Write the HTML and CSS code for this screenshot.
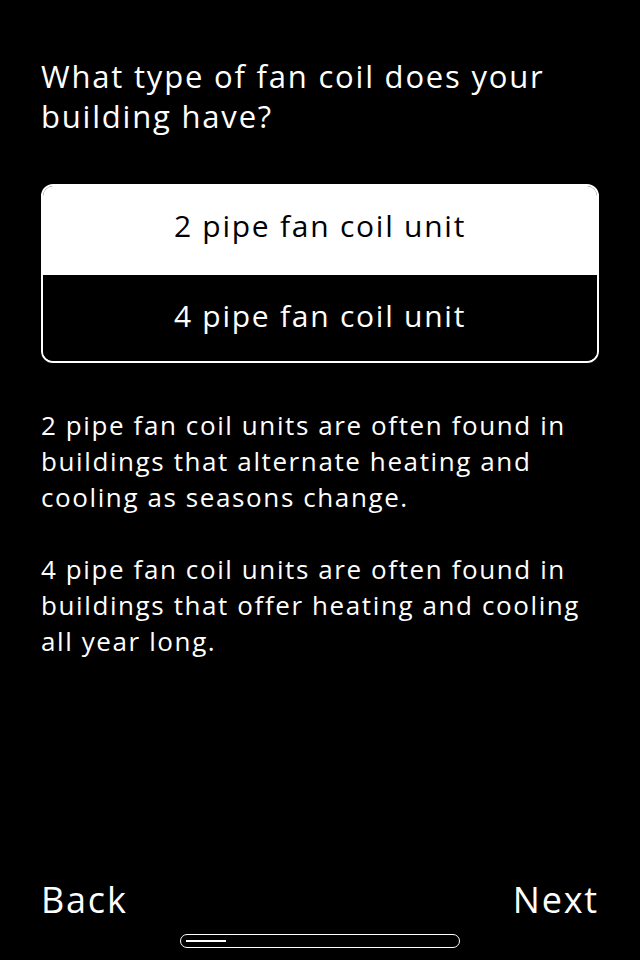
FILE: index.html
```html
<!DOCTYPE html>
<html>
<head>
<meta charset="utf-8">
<link rel="stylesheet" href="styles.css">
</head>
<body>
<div class="screen">
  <h1 class="title">What type of fan coil does your building have?</h1>
  <div class="options">
    <div class="option selected">2 pipe fan coil unit</div>
    <div class="option">4 pipe fan coil unit</div>
  </div>
  <div class="info">
    <p>2 pipe fan coil units are often found in buildings that alternate heating and cooling as seasons change.</p>
    <p>4 pipe fan coil units are often found in buildings that offer heating and cooling all year long.</p>
  </div>
  <div class="spacer"></div>
  <div class="nav">
    <span class="nav-btn">Back</span>
    <span class="nav-btn">Next</span>
  </div>
  <div class="progress"><div class="progress-fill"></div></div>
</div>
</body>
</html>
```
FILE: styles.css
```css
html, body {
  margin: 0;
  padding: 0;
  background: #000;
}
body {
  font-family: "Open Sans", "Noto Sans", sans-serif;
  color: #fff;
}
.screen {
  width: 640px;
  height: 960px;
  box-sizing: border-box;
  padding: 56px 41px 12px 41px;
  display: flex;
  flex-direction: column;
}
.title {
  margin: 0;
  font-weight: 400;
  font-size: 31px;
  line-height: 40px;
  letter-spacing: 1.8px;
  width: 558px;
}
.options {
  margin-top: 48px;
  border: 2px solid #fff;
  border-radius: 12px;
  overflow: hidden;
  display: flex;
  flex-direction: column;
}
.option {
  height: 80px;
  padding-bottom: 6px;
  display: flex;
  align-items: center;
  justify-content: center;
  font-size: 30px;
  letter-spacing: 1.75px;
  color: #fff;
  background: #000;
}
.option.selected {
  background: #fff;
  color: #000;
  height: 79px;
  padding-bottom: 10px;
}
.info {
  margin-top: 44px;
}
.info p {
  margin: 0 0 36px 0;
  font-size: 26px;
  line-height: 36px;
  letter-spacing: 1.6px;
}
.spacer { flex: 1; }
.nav {
  display: flex;
  justify-content: space-between;
  font-size: 36px;
  line-height: 40px;
  letter-spacing: 1.8px;
}
.progress {
  align-self: center;
  margin-top: 14px;
  width: 280px;
  height: 14px;
  box-sizing: border-box;
  border: 1.5px solid #fff;
  border-radius: 7px;
  display: flex;
  align-items: center;
  padding-left: 5px;
}
.progress-fill {
  width: 40px;
  height: 2px;
  background: #fff;
}
```
